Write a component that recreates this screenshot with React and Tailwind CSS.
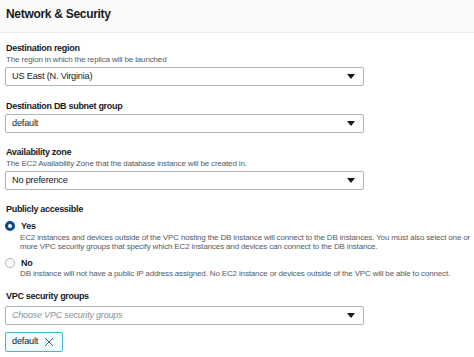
import React from "react";

function Caret() {
  return (
    <svg width="8" height="5" viewBox="0 0 8 5" className="shrink-0">
      <path d="M0 0 H8 L4 5 Z" fill="#16191f" />
    </svg>
  );
}

function Select({ children, placeholder }) {
  return (
    <div className="w-[359px] h-[19px] border border-[#aab7b8] rounded-[2px] bg-white flex items-center justify-between pl-[6px] pr-[8px]">
      {placeholder ? (
        <span className="text-[9px] italic text-[#879596] leading-none tracking-[-0.2px]">{placeholder}</span>
      ) : (
        <span className="text-[9.2px] text-[#16191f] leading-none tracking-[-0.2px]">{children}</span>
      )}
      <Caret />
    </div>
  );
}

function Label({ children }) {
  return <div className="text-[9px] font-bold text-[#16191f] leading-[12px] pl-[1px] tracking-[-0.3px]">{children}</div>;
}

function Desc({ children }) {
  return <div className="text-[8px] text-[#545b64] leading-[10px] pl-[1px] whitespace-nowrap tracking-[-0.15px] mt-[1px]">{children}</div>;
}

export default function App() {
  return (
    <div className="w-[474px] h-[357px] bg-white overflow-hidden font-['Liberation_Sans',Arial,sans-serif]">
      <div className="h-[33px] bg-[#fafafa] border-b border-[#eaeded] flex items-center pl-[6px] pb-[4px]">
        <span className="text-[12px] font-bold text-[#16191f] tracking-[-0.3px]">Network &amp; Security</span>
      </div>
      <div className="pl-[5px] flex flex-col">
        <div className="mt-[9px] flex flex-col">
          <Label>Destination region</Label>
          <Desc>The region in which the replica will be launched</Desc>
          <div className="mt-[2px]">
            <Select>US East (N. Virginia)</Select>
          </div>
        </div>
        <div className="mt-[14px] flex flex-col">
          <Label>Destination DB subnet group</Label>
          <div className="mt-[2px]">
            <Select>default</Select>
          </div>
        </div>
        <div className="mt-[13px] flex flex-col">
          <Label>Availability zone</Label>
          <Desc>The EC2 Availability Zone that the database instance will be created in.</Desc>
          <div className="mt-[2px]">
            <Select>No preference</Select>
          </div>
        </div>
        <div className="mt-[13px] flex flex-col">
          <Label>Publicly accessible</Label>
          <div className="mt-[5px] flex items-center h-[12px]">
            <span className="w-[10px] h-[10px] rounded-full border-[3px] border-[#0a4a8c] bg-white" />
            <span className="ml-[6px] text-[9px] font-bold text-[#16191f] leading-none tracking-[-0.3px]">Yes</span>
          </div>
          <div className="pl-[15px] text-[8px] text-[#545b64] leading-[9px] whitespace-nowrap tracking-[-0.15px] mt-[1px]">
            EC2 instances and devices outside of the VPC hosting the DB instance will connect to the DB instances. You must also select one or
            <br />
            more VPC security groups that specify which EC2 instances and devices can connect to the DB instance.
          </div>
          <div className="mt-[6px] flex items-center h-[12px]">
            <span className="w-[10px] h-[10px] rounded-full border border-[#aab7b8] bg-white" />
            <span className="ml-[6px] text-[9px] font-bold text-[#16191f] leading-none tracking-[-0.3px]">No</span>
          </div>
          <div className="pl-[15px] text-[8px] text-[#545b64] leading-[9px] whitespace-nowrap tracking-[-0.15px]">
            DB instance will not have a public IP address assigned. No EC2 instance or devices outside of the VPC will be able to connect.
          </div>
        </div>
        <div className="mt-[12px] flex flex-col">
          <Label>VPC security groups</Label>
          <div className="mt-[4px]">
            <Select placeholder="Choose VPC security groups" />
          </div>
          <div className="mt-[7px] flex">
            <div className="h-[20px] w-[58px] border border-[#44b9d6] bg-[#f1faff] rounded-[2px] flex items-center pl-[6px]">
              <span className="text-[9.2px] text-[#16191f] leading-none tracking-[-0.2px]">default</span>
              <svg width="10" height="10" viewBox="0 0 10 10" className="ml-[6px]">
                <path d="M1 1 L9 9 M9 1 L1 9" stroke="#545b64" strokeWidth="1" />
              </svg>
            </div>
          </div>
        </div>
      </div>
    </div>
  );
}
